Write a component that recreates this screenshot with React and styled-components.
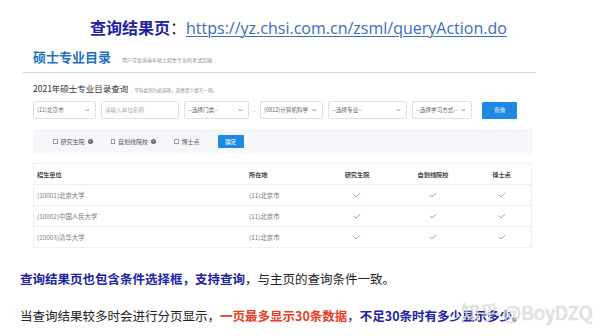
import React from "react";
import styled, { createGlobalStyle } from "styled-components";

const Global = createGlobalStyle`
  html, body { margin: 0; padding: 0; background: #fff; }
  body {
    width: 600px; height: 336px; overflow: hidden;
    font-family: "Noto Sans CJK SC", "Noto Sans", sans-serif;
  }
`;

const Page = styled.div`
  position: relative;
  width: 600px;
  height: 336px;
  overflow: hidden;
`;

const TitleRow = styled.div`
  display: flex;
  align-items: baseline;
  padding: 17px 0 0 90px;
  height: 20px;
  line-height: 20px;
  white-space: nowrap;
`;
const TitleCn = styled.span`
  font-size: 16px;
  font-weight: 700;
  color: #1c22a4;
`;
const Colon = styled.span`
  font-size: 16px;
  color: #222;
`;
const Link = styled.span`
  font-family: "Open Sans", "Liberation Sans", sans-serif;
  font-size: 16px;
  color: #3a6cc2;
  text-decoration: underline;
  text-decoration-thickness: 1px;
  text-underline-offset: 2px;
`;

const Panel = styled.div`
  margin-left: 23px;
  width: 513px;
`;
const PanelHeader = styled.div`
  display: flex;
  align-items: baseline;
  gap: 11px;
  padding: 12px 0 5px 10px;
  line-height: 15px;
  border-bottom: 1.5px solid #cdd6df;
`;
const PanelTitle = styled.span`
  font-size: 13px;
  font-weight: 700;
  color: #1f6fc5;
`;
const Tiny = styled.span`
  font-size: ${(p) => p.$size || 4.6}px;
  color: #8a8a8a;
  white-space: nowrap;
`;
const Body = styled.div`
  padding: 0 4px 0 10px;
`;
const Heading = styled.div`
  display: flex;
  align-items: baseline;
  gap: 6px;
  padding-top: 9px;
  line-height: 12px;
`;
const HeadingText = styled.span`
  font-size: 8.5px;
  color: #333;
  white-space: nowrap;
`;

const Controls = styled.div`
  display: flex;
  align-items: center;
  gap: 5px;
  margin-top: 5px;
  height: 18px;
`;
const Select = styled.div`
  box-sizing: border-box;
  width: ${(p) => p.$w}px;
  height: 18px;
  display: flex;
  align-items: center;
  justify-content: space-between;
  padding: 0 5px 0 3px;
  border: 1px solid #dcdfe6;
  border-radius: 2px;
  font-size: 5.6px;
  color: ${(p) => (p.$placeholder ? "#aaa" : "#666")};
  white-space: nowrap;
  overflow: hidden;
`;
const Dash = styled.span`
  width: 1px;
  font-size: 6px;
  color: #888;
  display: flex;
  justify-content: center;
`;
const Button = styled.div`
  width: ${(p) => p.$w}px;
  height: ${(p) => p.$h}px;
  margin-left: ${(p) => p.$ml || 0}px;
  background: #1e88e5;
  color: #fff;
  font-size: 5.6px;
  display: flex;
  align-items: center;
  justify-content: center;
  border-radius: 1px;
`;

const FilterBar = styled.div`
  margin-top: 10px;
  height: 25px;
  background: #f5f7fa;
  display: flex;
  align-items: center;
  gap: 18px;
  padding-left: 20px;
`;
const FilterItem = styled.label`
  display: flex;
  align-items: center;
  gap: 2px;
  font-size: 6px;
  color: #555;
  white-space: nowrap;
`;
const Box = styled.span`
  box-sizing: border-box;
  width: 4.5px;
  height: 4.5px;
  border: 0.8px solid #999;
  background: #fff;
  margin-right: 1px;
`;
const Help = styled.span`
  width: 5px;
  height: 5px;
  border-radius: 50%;
  background: #666;
  color: #fff;
  font-size: 4px;
  line-height: 5px;
  text-align: center;
  margin-left: 1px;
`;

const Table = styled.div`
  margin-top: 9px;
  border: 1px solid #eef0f4;
`;
const Row = styled.div`
  display: grid;
  grid-template-columns: 212px 74px 74px 78px 59px;
  align-items: center;
  height: 20px;
  border-top: ${(p) => (p.$first ? "none" : "1px solid #ebeef3")};
`;
const Cell = styled.div`
  padding-left: ${(p) => (p.$center ? 0 : 3)}px;
  font-size: ${(p) => (p.$head ? 6.2 : 6.4)}px;
  font-weight: ${(p) => (p.$head ? 700 : 400)};
  color: ${(p) => (p.$head ? "#444" : "#777")};
  white-space: nowrap;
  display: flex;
  justify-content: ${(p) => (p.$center ? "center" : "flex-start")};
`;

const Notes = styled.div`
  padding-left: 20px;
  margin-top: 21px;
`;
const NoteLine = styled.div`
  font-size: 12.5px;
  line-height: 20px;
  color: #222;
  white-space: nowrap;
  margin-top: ${(p) => p.$mt || 0}px;
`;
const Em = styled.span`
  font-weight: 700;
  color: ${(p) => (p.$red ? "#e5401e" : "#1c22a4")};
`;

const Watermark = styled.div`
  position: absolute;
  left: 461px;
  top: 300px;
  font-size: 19px;
  line-height: 24px;
  color: rgba(255, 255, 255, 0.72);
  text-shadow: 0 0 1px rgba(0, 0, 0, 0.4);
  white-space: nowrap;
  font-family: "Noto Sans CJK SC", "Noto Sans", sans-serif;
`;

const Chevron = () => (
  <svg width="5" height="4" viewBox="0 0 5 4">
    <polyline points="0.6,1 2.5,3 4.4,1" fill="none" stroke="#777" strokeWidth="0.8" />
  </svg>
);

const Check = () => (
  <svg width="8" height="6" viewBox="0 0 8 6">
    <polyline points="0.8,3 3,5 7.2,1" fill="none" stroke="#8a8a8a" strokeWidth="0.8" />
  </svg>
);

const selects = [
  { w: 63, text: "(11)北京市", chev: true },
  { w: 78, text: "请输入单位名称", placeholder: true },
  { w: 65, text: "--选择门类--", chev: true },
  "dash",
  { w: 63, text: "(0812)计算机科学", chev: true },
  { w: 79, text: "--选择专业--", chev: true },
  { w: 60, text: "--选择学习方式--", chev: true },
];

const rows = [
  ["(10001)北京大学", "(11)北京市"],
  ["(10002)中国人民大学", "(11)北京市"],
  ["(10003)清华大学", "(11)北京市"],
];

export default function App() {
  return (
    <Page>
      <Global />
      <TitleRow>
        <TitleCn>查询结果页</TitleCn>
        <Colon>：</Colon>
        <Link>https://yz.chsi.com.cn/zsml/queryAction.do</Link>
      </TitleRow>
      <Panel>
        <PanelHeader>
          <PanelTitle>硕士专业目录</PanelTitle>
          <Tiny $size={5}>用户可查询当年硕士招生专业的考试范围</Tiny>
        </PanelHeader>
        <Body>
          <Heading>
            <HeadingText>2021年硕士专业目录查询</HeadingText>
            <Tiny $size={4.6}>学科类别为必选项，其他至少填写一项。</Tiny>
          </Heading>
          <Controls>
            {selects.map((s, i) =>
              s === "dash" ? (
                <Dash key={i}>-</Dash>
              ) : (
                <Select key={i} $w={s.w} $placeholder={s.placeholder}>
                  <span>{s.text}</span>
                  {s.chev && <Chevron />}
                </Select>
              )
            )}
            <Button $w={35} $h={17} $ml={5}>查询</Button>
          </Controls>
          <FilterBar>
            <FilterItem>
              <Box />
              研究生院
              <Help>?</Help>
            </FilterItem>
            <FilterItem>
              <Box />
              自划线院校
              <Help>?</Help>
            </FilterItem>
            <FilterItem>
              <Box />
              博士点
            </FilterItem>
            <Button $w={26} $h={13}>确定</Button>
          </FilterBar>
          <Table>
            <Row $first>
              <Cell $head>招生单位</Cell>
              <Cell $head>所在地</Cell>
              <Cell $head $center>研究生院</Cell>
              <Cell $head $center>自划线院校</Cell>
              <Cell $head $center>博士点</Cell>
            </Row>
            {rows.map((r, i) => (
              <Row key={i}>
                <Cell>{r[0]}</Cell>
                <Cell>{r[1]}</Cell>
                <Cell $center><Check /></Cell>
                <Cell $center><Check /></Cell>
                <Cell $center><Check /></Cell>
              </Row>
            ))}
          </Table>
        </Body>
      </Panel>
      <Notes>
        <NoteLine>
          <Em>查询结果页也包含条件选择框，支持查询</Em>，与主页的查询条件一致。
        </NoteLine>
        <NoteLine $mt={17}>
          当查询结果较多时会进行分页显示，<Em $red>一页最多显示30条数据</Em>，
          <Em>不足30条时有多少显示多少</Em>。
        </NoteLine>
      </Notes>
      <Watermark>知乎 @BoyDZQ</Watermark>
    </Page>
  );
}
